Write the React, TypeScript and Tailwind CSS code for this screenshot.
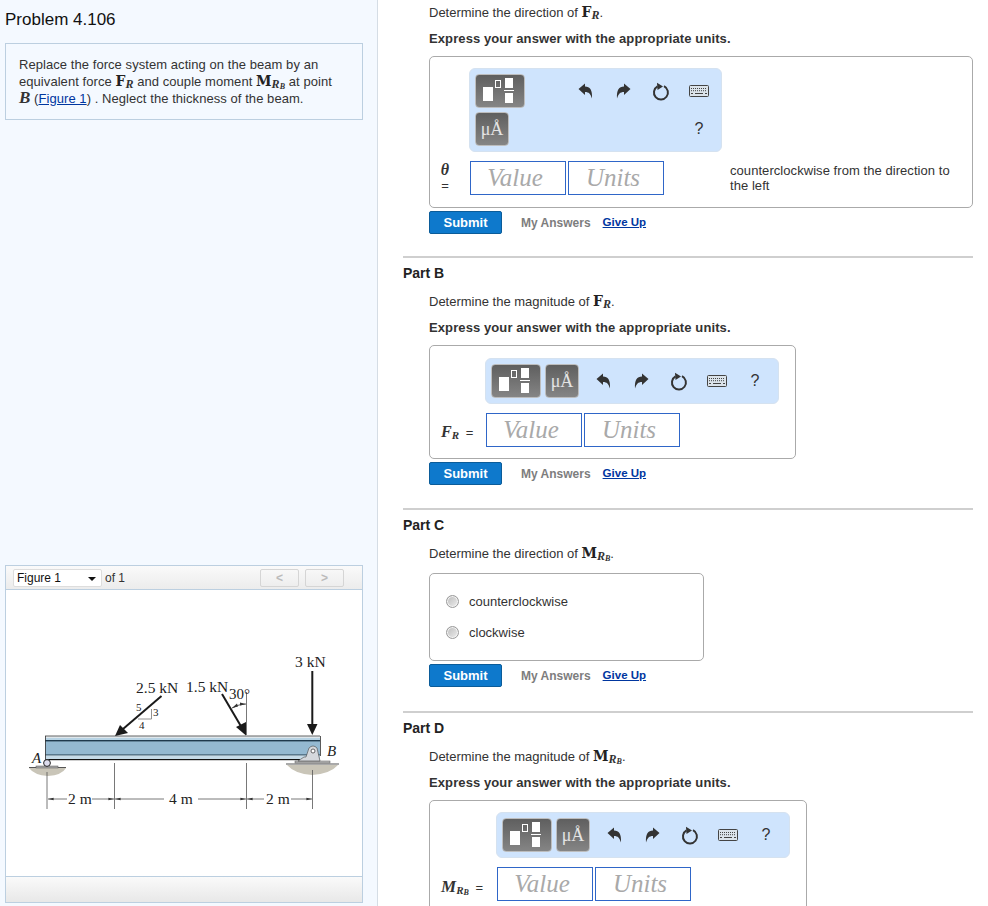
import React from "react";

const serif = "font-['Liberation_Serif',serif]";

// Bold symbol with italic subscript, e.g. F_R
const Sym = ({ name, sub, sub2 }: { name: string; sub: string; sub2?: string }) => (
  <span className="whitespace-nowrap">
    <span className="font-['DejaVu_Serif',serif] font-bold text-[14px] leading-[0] text-[#222]">{name}</span>
    <span className={`${serif} font-bold italic text-[12px] leading-[0] relative top-[2px] text-[#333]`}>{sub}</span>
    {sub2 && <span className={`${serif} font-bold italic text-[8px] leading-[0] relative top-[3px] text-[#333]`}>{sub2}</span>}
  </span>
);

const Undo = ({ flip }: { flip?: boolean }) => (
  <svg width="15" height="16" viewBox="0 0 15 16" className={flip ? "-scale-x-100" : ""}>
    <path d="M0.5 6 L7 0.5 V3.5 C12 3.5 14.5 7 14 15.5 C12.5 11 11 9 7 9 V12 Z" fill="#333" />
  </svg>
);

const Reset = () => (
  <svg width="18" height="19" viewBox="0 0 18 19">
    <path d="M12 4.2 A7 7 0 1 1 5.5 4.4" fill="none" stroke="#333" strokeWidth="2" />
    <path d="M5 0.8 L11 4.5 L5.5 8 Z" fill="#333" />
  </svg>
);

const Keyboard = () => (
  <svg width="20" height="12" viewBox="0 0 20 12">
    <rect x="0.5" y="0.5" width="19" height="11" rx="1" fill="#dbe3ea" stroke="#444" />
    <path d="M2 3.5 H18 M2 5.7 H18" stroke="#444" strokeDasharray="1 1" />
    <path d="M2 8.5 H4 M6 8.5 H14 M16 8.5 H18" stroke="#444" />
  </svg>
);

const TemplateBtn = () => (
  <div className="w-[50px] h-[34px] shrink-0 rounded-[4px] border border-[#bdbdbd] bg-gradient-to-b from-[#5f5f5f] to-[#858585]">
    <svg width="48" height="32" viewBox="0 0 48 32">
      <rect x="7" y="12" width="10" height="14" fill="#fff" />
      <rect x="19.5" y="5.5" width="5" height="7" fill="none" stroke="#fff" />
      <rect x="29" y="3" width="8" height="10" fill="#fff" />
      <rect x="28" y="15" width="10" height="1" fill="#fff" />
      <rect x="29" y="18" width="8" height="10" fill="#fff" />
    </svg>
  </div>
);

const UnitBtn = () => (
  <div className={`${serif} w-[34px] h-[34px] shrink-0 rounded-[4px] border border-[#bdbdbd] bg-gradient-to-b from-[#5f5f5f] to-[#858585] text-[#e4e4e4] text-[18px] flex items-center justify-center`}>
    μÅ
  </div>
);

const Slot = ({ children }: { children: React.ReactNode }) => (
  <div className="w-[38px] h-[34px] flex items-center justify-center">{children}</div>
);

const Help = () => <span className="text-[16px] text-[#333]">?</span>;

const WideToolbar = () => (
  <div className="w-[294px] h-[46px] rounded-[6px] bg-[#cfe4fd] border border-[#d5e2f0] flex items-center pl-[5px] gap-1">
    <TemplateBtn />
    <UnitBtn />
    <div className="flex ml-[1px]">
      <Slot><Undo /></Slot>
      <Slot><Undo flip /></Slot>
      <Slot><Reset /></Slot>
      <Slot><Keyboard /></Slot>
      <Slot><Help /></Slot>
    </div>
  </div>
);

const Inputs = () => (
  <div className={`${serif} ml-[1px] flex gap-[2px] italic text-[25px] text-[#a9a9a9]`}>
    <div className="w-[96px] h-[34px] border border-[#2f66c8] flex items-center justify-center pr-[6px]">Value</div>
    <div className="w-[96px] h-[34px] border border-[#2f66c8] flex items-center justify-center pr-[6px]">Units</div>
  </div>
);

const SubmitRow = () => (
  <div className="mt-[3px] flex items-center h-[23px] font-bold text-[12px]">
    <div className="w-[73px] h-[23px] rounded-[2px] bg-[#0e79cc] border border-[#0b5c99] text-white text-[13px] flex items-center justify-center">Submit</div>
    <span className="ml-[19px] text-[#7d7d7d]">My Answers</span>
    <span className="ml-3 text-[#00369f] underline text-[11.5px]">Give Up</span>
  </div>
);

const Line = ({ children, bold }: { children: React.ReactNode; bold?: boolean }) => (
  <div className={`h-6 leading-[26px] mb-[2px] whitespace-nowrap text-[#333] ${bold ? "font-bold tracking-[0.1px]" : ""}`}>{children}</div>
);

const PartHead = ({ label, gap }: { label: string; gap: string }) => (
  <>
    <div className={`${gap} h-[2px] bg-[#cfcfcf]`} />
    <div className="mt-[5px] mb-[6px] h-5 flex items-center font-bold text-[14px] text-[#222]">{label}</div>
  </>
);

const Beam = () => (
  <svg width="356" height="286" viewBox="6 590 356 286" className="block">
    <defs>
      <marker id="tick" markerWidth="7" markerHeight="5" refX="7" refY="2.5" orient="auto-start-reverse">
        <path d="M0 1 L7 2.5 L0 4 Z" fill="#333" />
      </marker>
    </defs>
    {/* ground */}
    <path d="M29 768 H66 Q62 775 48 776 Q34 775 29 768 Z" fill="#c9c5b8" />
    <path d="M287 765 H338 Q330 774 312 775 Q295 774 287 765 Z" fill="#c9c5b8" />
    <rect x="29" y="767" width="37" height="1" fill="#555" />
    <rect x="36" y="766" width="22" height="2" fill="#a9a9a9" stroke="#555" strokeWidth="0.5" />
    <rect x="286" y="763.5" width="53" height="1" fill="#555" />
    <rect x="295" y="761" width="35" height="2" fill="#bbb" stroke="#555" strokeWidth="0.5" />
    {/* beam */}
    <rect x="45" y="736" width="275" height="3" fill="#dfe6ea" />
    <rect x="45" y="738" width="275" height="3" fill="#b7d3e4" />
    <rect x="45" y="741" width="275" height="14" fill="#94b9d1" />
    <rect x="45" y="740" width="275" height="1.4" fill="#1f3a4d" />
    <rect x="45" y="754.5" width="275" height="1.2" fill="#1f3a4d" />
    <rect x="45" y="755.5" width="275" height="4" fill="#c6dbe8" />
    <rect x="45" y="759" width="255" height="1.2" fill="#111" />
    <rect x="45" y="735.5" width="275" height="1" fill="#666" />
    <rect x="45" y="736" width="0.8" height="24" fill="#333" />
    <rect x="320" y="736" width="0.8" height="20" fill="#333" />
    {/* supports */}
    <circle cx="47" cy="763" r="3.4" fill="#dde" stroke="#222" />
    <path d="M298 761 L304 757 L306 757 L309 748 Q313 744 317 748 L320 761 Z" fill="#d5d8dc" stroke="#444" strokeWidth="0.6" />
    <circle cx="313" cy="751" r="2" fill="#fff" stroke="#444" strokeWidth="0.8" />
    {/* dimensions */}
    <g stroke="#555" strokeWidth="0.8">
      <path d="M47 772 V809 M114.5 763 V809 M246.5 763 V809 M312.5 770 V809" />
    </g>
    <g stroke="#555" strokeWidth="0.8" fill="none">
      <path d="M67 799 H48" markerEnd="url(#tick)" />
      <path d="M92 799 H114" markerEnd="url(#tick)" />
      <path d="M164 799 H115" markerEnd="url(#tick)" />
      <path d="M198 799 H246" markerEnd="url(#tick)" />
      <path d="M264 799 H247" markerEnd="url(#tick)" />
      <path d="M291 799 H312" markerEnd="url(#tick)" />
    </g>
    {/* slope triangle */}
    <path d="M138 719 H151.5 V709" fill="none" stroke="#777" strokeWidth="0.8" />
    {/* forces */}
    <g stroke="#1a1a1a" strokeWidth="2">
      <path d="M161.5 696 L123 729" />
      <path d="M222 694 L242 728" />
      <path d="M312.3 671 V725" />
    </g>
    <path d="M115 736 L120 725 L128 733 Z" fill="#1a1a1a" />
    <path d="M246 735.5 L236 727 L246 722 Z" fill="#1a1a1a" />
    <path d="M312.3 735 L307 724 H317.5 Z" fill="#1a1a1a" />
    <path d="M246.5 692 V735" stroke="#555" strokeWidth="0.8" />
    <path d="M232 708 Q239 704 246 704" stroke="#333" strokeWidth="0.8" fill="none" />
    <path d="M232 708 L237 703.5 L238 706.5 Z M246 704 L240 702.5 L240 705.5 Z" fill="#333" />
    {/* labels */}
    <g fontFamily="'Liberation Serif', serif" fill="#222">
      <text x="136" y="693" fontSize="15.5">2.5 kN</text>
      <text x="186" y="692" fontSize="15.5">1.5 kN</text>
      <text x="229" y="699" fontSize="15">30°</text>
      <text x="295" y="667" fontSize="15.5">3 kN</text>
      <text x="136" y="711" fontSize="11">5</text>
      <text x="153" y="716" fontSize="11">3</text>
      <text x="139" y="729" fontSize="11">4</text>
      <text x="68" y="804" fontSize="15.5">2 m</text>
      <text x="169" y="804" fontSize="15.5">4 m</text>
      <text x="266" y="804" fontSize="15.5">2 m</text>
      <text x="32" y="763" fontSize="15" fontStyle="italic">A</text>
      <text x="327" y="756" fontSize="15" fontStyle="italic">B</text>
    </g>
  </svg>
);

const Radio = ({ label }: { label: string }) => (
  <div className="flex items-center h-[31px]">
    <span className="w-[13px] h-[13px] rounded-full border border-[#9a9a9a] bg-gradient-to-br from-[#bbb] to-[#eee] shadow-[inset_0_0_0_1px_#f3f3f3]" />
    <span className="ml-[10px]">{label}</span>
  </div>
);

export default function App() {
  return (
    <div className="flex h-[906px] w-[988px] overflow-hidden bg-white font-['Liberation_Sans',Arial,sans-serif] text-[13px] text-[#333]">
      {/* Left: problem statement and figure */}
      <div className="w-[378px] h-full shrink-0 bg-[#f4f9ff] border-r border-[#d5dde5] pl-[5px] flex flex-col">
        <h1 className="h-[38px] pt-[2px] flex items-center text-[17px] text-[#111]">Problem 4.106</h1>
        <div className="mt-[5px] w-[358px] h-[77px] border border-[#bccfe0] pl-[13px] pt-[12px] leading-[17px] tracking-[0.06px]">
          <p className="h-[17px] whitespace-nowrap">Replace the force system acting on the beam by an</p>
          <p className="h-[17px] whitespace-nowrap">equivalent force <Sym name="F" sub="R" /> and couple moment <Sym name="M" sub="R" sub2="B" /> at point</p>
          <p className="h-[17px] whitespace-nowrap">
            <span className={`${serif} font-bold italic text-[17px] leading-[0]`}>B</span>{" "}
            (<span className="text-[#00369f] underline">Figure 1</span>) . Neglect the thickness of the beam.
          </p>
        </div>

        <div className="mt-[445px] w-[358px] h-[338px] border border-[#bccfe0] bg-white flex flex-col">
          <div className="h-[24px] shrink-0 border-b border-[#bccfe0] bg-gradient-to-b from-[#fafafa] to-[#ececec] flex items-center pl-[7px] text-[12px]">
            <div className="w-[89px] h-[18px] bg-white border border-[#ddd] rounded-[2px] flex items-center justify-between pl-[3px] pr-[5px] text-[#111]">
              Figure 1
              <span className="w-0 h-0 border-x-[4px] border-x-transparent border-t-[4px] border-t-[#111] mt-[2px]" />
            </div>
            <span className="ml-[3px]">of 1</span>
            <div className="ml-auto mr-[18px] flex gap-[6px] text-[#bbb] text-[12px] font-bold">
              <div className="w-[39px] h-[18px] rounded-[2px] border border-[#d5d5d5] flex items-center justify-center">&lt;</div>
              <div className="w-[39px] h-[18px] rounded-[2px] border border-[#d5d5d5] flex items-center justify-center">&gt;</div>
            </div>
          </div>
          <div className="flex-1 min-h-0"><Beam /></div>
          <div className="h-[26px] shrink-0 border-t border-[#bccfe0] bg-gradient-to-b from-[#fafafa] to-[#e8e8e8]" />
        </div>
      </div>

      {/* Right: question parts */}
      <div className="w-[570px] ml-[25px] shrink-0">
        <div className="pl-[26px]">
          <Line>Determine the direction of <Sym name="F" sub="R" />.</Line>
          <Line bold>Express your answer with the appropriate units.</Line>
          <div className="mt-[6px] w-[544px] h-[152px] border border-[#aaa] rounded-[5px] pl-[39px] pt-[11px]">
            <div className="w-[253px] h-[84px] rounded-[6px] bg-[#cfe4fd] border border-[#d5e2f0] pl-[5px] pt-[5px] flex flex-col gap-1">
              <div className="flex items-center">
                <TemplateBtn />
                <div className="flex ml-[41px]">
                  <Slot><Undo /></Slot>
                  <Slot><Undo flip /></Slot>
                  <Slot><Reset /></Slot>
                  <Slot><Keyboard /></Slot>
                </div>
              </div>
              <div className="flex items-center">
                <UnitBtn />
                <div className="ml-[171px]"><Slot><Help /></Slot></div>
              </div>
            </div>
            <div className="relative mt-[9px] flex items-center">
              <div className="absolute left-[-35px] w-[22px] text-center leading-[16px]">
                <div className={`${serif} font-bold italic text-[16px]`}>θ</div>
                <div>=</div>
              </div>
              <Inputs />
              <div className="ml-[66px] w-[232px] leading-[15px] tracking-[0.06px]">counterclockwise from the direction to the left</div>
            </div>
          </div>
          <SubmitRow />
        </div>

        <PartHead label="Part B" gap="mt-[22px]" />
        <div className="pl-[26px]">
          <Line>Determine the magnitude of <Sym name="F" sub="R" />.</Line>
          <Line bold>Express your answer with the appropriate units.</Line>
          <div className="mt-[6px] w-[367px] h-[114px] border border-[#aaa] rounded-[5px] pl-[55px] pt-[12px]">
            <WideToolbar />
            <div className="relative mt-[9px]">
              <div className="absolute left-[-44px] top-[7px] whitespace-nowrap">
                <span className={`${serif} font-bold italic text-[16px]`}>F</span>
                <span className={`${serif} font-bold italic text-[11px] relative top-[2px]`}>R</span>
                <span className="ml-[3px]"> =</span>
              </div>
              <Inputs />
            </div>
          </div>
          <SubmitRow />
        </div>

        <PartHead label="Part C" gap="mt-[23px]" />
        <div className="pl-[26px]">
          <Line>Determine the direction of <Sym name="M" sub="R" sub2="B" />.</Line>
          <div className="mt-[8px] w-[275px] h-[88px] border border-[#aaa] rounded-[5px] pl-[16px] pt-[12px]">
            <Radio label="counterclockwise" />
            <Radio label="clockwise" />
          </div>
          <SubmitRow />
        </div>

        <PartHead label="Part D" gap="mt-[24px]" />
        <div className="pl-[26px]">
          <Line>Determine the magnitude of <Sym name="M" sub="R" sub2="B" />.</Line>
          <Line bold>Express your answer with the appropriate units.</Line>
          <div className="mt-[6px] w-[378px] h-[130px] border border-[#aaa] rounded-[5px] pl-[66px] pt-[11px]">
            <WideToolbar />
            <div className="relative mt-[9px]">
              <div className="absolute left-[-55px] top-[7px] whitespace-nowrap">
                <span className={`${serif} font-bold italic text-[17px]`}>M</span>
                <span className={`${serif} font-bold italic text-[11px] relative top-[2px]`}>R</span>
                <span className={`${serif} font-bold italic text-[8px] relative top-[3px]`}>B</span>
                <span className="ml-[3px]"> =</span>
              </div>
              <Inputs />
            </div>
          </div>
        </div>
      </div>
    </div>
  );
}
